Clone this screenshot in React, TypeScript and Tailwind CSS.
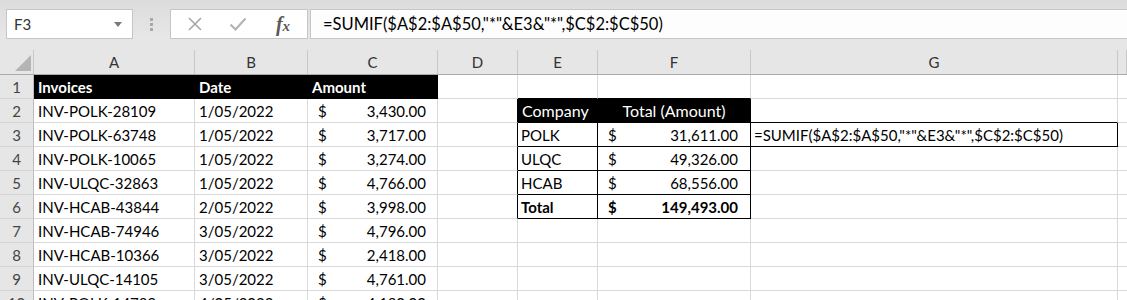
import React from "react";
import { twMerge } from "tailwind-merge";

const base =
  "h-[24px] border-r border-b border-r-[#d9d9d9] border-b-[#d9d9d9] flex items-center whitespace-nowrap overflow-hidden text-[15px] text-black px-[4px] pt-[1px]";

function C({ children, className }: { children?: React.ReactNode; className?: string }) {
  return <div className={twMerge(base, className)}>{children}</div>;
}

function RH({ n }: { n: number }) {
  return (
    <div className="h-[24px] border-r border-b border-r-[#bdbdbd] border-b-[#d4d4d4] bg-[#e6e6e6] flex items-center justify-center text-[15px] text-[#444] pt-[1px]">
      {n}
    </div>
  );
}

function Money({ v, className }: { v: string; className?: string }) {
  return (
    <C className={twMerge("justify-between pl-[10px] pr-[11px]", className)}>
      <span>$</span>
      <span>{v}</span>
    </C>
  );
}

const data: [string, string, string][] = [
  ["INV-POLK-28109", "1/05/2022", "3,430.00"],
  ["INV-POLK-63748", "1/05/2022", "3,717.00"],
  ["INV-POLK-10065", "1/05/2022", "3,274.00"],
  ["INV-ULQC-32863", "1/05/2022", "4,766.00"],
  ["INV-HCAB-43844", "2/05/2022", "3,998.00"],
  ["INV-HCAB-74946", "3/05/2022", "4,796.00"],
  ["INV-HCAB-10366", "3/05/2022", "2,418.00"],
  ["INV-ULQC-14105", "3/05/2022", "4,761.00"],
  ["INV-POLK-14789", "4/05/2022", "4,180.00"],
];

const summary: Record<number, [string, string]> = {
  3: ["POLK", "31,611.00"],
  4: ["ULQC", "49,326.00"],
  5: ["HCAB", "68,556.00"],
};

const formula = '=SUMIF($A$2:$A$50,"*"&E3&"*",$C$2:$C$50)';

const gridCols = "grid grid-cols-[34px_161px_113px_130px_80px_80px_153px_367px_1fr]";

export default function App() {
  return (
    <div className="w-[1127px] h-[300px] overflow-hidden bg-white font-['Lato','Noto_Sans',sans-serif]">
      {/* Formula bar */}
      <div className="h-[39px] bg-gradient-to-b from-[#dcdcdc] to-[#e7e7e7] flex items-end">
        <div className="ml-[6px] w-[127px] h-[30px] bg-white border border-[#c6c6c6] flex items-center justify-between pl-[7px] pr-[10px]">
          <span className="text-[15px] text-[#333]">F3</span>
          <svg width="8" height="5" viewBox="0 0 8 5">
            <path d="M0 0 L8 0 L4 5 Z" fill="#7a7a7a" />
          </svg>
        </div>
        <div className="w-[37px] h-[30px] flex flex-col items-center justify-center gap-[2px]">
          <div className="w-[3px] h-[3px] bg-[#a8a8a8]" />
          <div className="w-[3px] h-[3px] bg-[#a8a8a8]" />
          <div className="w-[3px] h-[3px] bg-[#a8a8a8]" />
        </div>
        <div className="w-[138px] h-[30px] bg-white border border-[#c6c6c6] flex items-center">
          <div className="w-[45px] flex justify-center pl-[2px]">
            <svg width="16" height="16" viewBox="0 0 16 16">
              <path d="M2 2 L14 14 M14 2 L2 14" stroke="#a6a6a6" strokeWidth="1.6" fill="none" />
            </svg>
          </div>
          <div className="w-[44px] flex justify-center">
            <svg width="18" height="16" viewBox="0 0 18 16">
              <path d="M1.5 8.5 L6.5 13.5 L16.5 2.5" stroke="#b4b4b4" strokeWidth="2.2" fill="none" />
            </svg>
          </div>
          <div className="w-[46px] flex justify-center">
            <span className="font-['Liberation_Serif',serif] italic font-bold text-[#5a5a5a] text-[20px] leading-none">
              f<span className="text-[15px]">x</span>
            </span>
          </div>
        </div>
        <div className="ml-[2px] flex-1 h-[30px] bg-[#fdfdfd] border border-r-0 border-[#c6c6c6] flex items-center pl-[12px] text-[16.5px] text-black whitespace-nowrap">
          {formula}
        </div>
      </div>
      <div className="h-[11px] bg-[#e6e6e6]" />
      {/* Column headers */}
      <div className={twMerge(gridCols, "h-[25px] bg-[#e6e6e6] border-b border-[#ababab]")}>
        <div className="border-r border-[#c8c8c8] relative">
          <svg className="absolute left-[15px] top-[5px]" width="16" height="16" viewBox="0 0 16 16">
            <path d="M16 0 L16 16 L0 16 Z" fill="#b4b4b4" />
          </svg>
        </div>
        {["A", "B", "C", "D", "E", "F", "G", "H"].map((l) => (
          <div key={l} className="border-r border-[#c8c8c8] flex items-center justify-center text-[15px] text-[#333]">
            {l === "H" ? "" : l}
          </div>
        ))}
      </div>
      {/* Row 1 */}
      <div className={gridCols}>
        <RH n={1} />
        <C className="bg-black border-r-black border-b-black text-white font-bold">Invoices</C>
        <C className="bg-black border-r-black border-b-black text-white font-bold">Date</C>
        <C className="bg-black border-r-black border-b-black text-white font-bold">Amount</C>
        <C />
        <C className="border-b-black" />
        <C className="border-b-black" />
        <C />
        <C className="border-r-0" />
      </div>
      {data.map(([inv, date, amt], i) => {
        const r = i + 2;
        const inTable = r >= 2 && r <= 6;
        return (
          <div key={r} className={gridCols}>
            <RH n={r} />
            <C>{inv}</C>
            <C>{date}</C>
            <Money v={amt} />
            <C className={inTable ? "border-r-black" : ""} />
            {r === 2 && (
              <>
                <C className="bg-black border-r-black border-b-black text-white text-[16px]">Company</C>
                <C className="bg-black border-r-black border-b-black text-white text-[16px] justify-center">Total (Amount)</C>
                <C className="border-b-black" />
              </>
            )}
            {summary[r] && (
              <>
                <C className="border-r-black border-b-black pl-[3px]">{summary[r][0]}</C>
                <Money v={summary[r][1]} className="border-r-black border-b-black pr-[12px]" />
                {r === 3 ? (
                  <C className="border-r-black border-b-black pl-[3px]">{formula}</C>
                ) : (
                  <C />
                )}
              </>
            )}
            {r === 6 && (
              <>
                <C className="border-r-black border-b-black pl-[3px] font-bold">Total</C>
                <Money v="149,493.00" className="border-r-black border-b-black pr-[12px] font-bold" />
                <C />
              </>
            )}
            {r > 6 && (
              <>
                <C />
                <C />
                <C />
              </>
            )}
            <C className="border-r-0" />
          </div>
        );
      })}
    </div>
  );
}
